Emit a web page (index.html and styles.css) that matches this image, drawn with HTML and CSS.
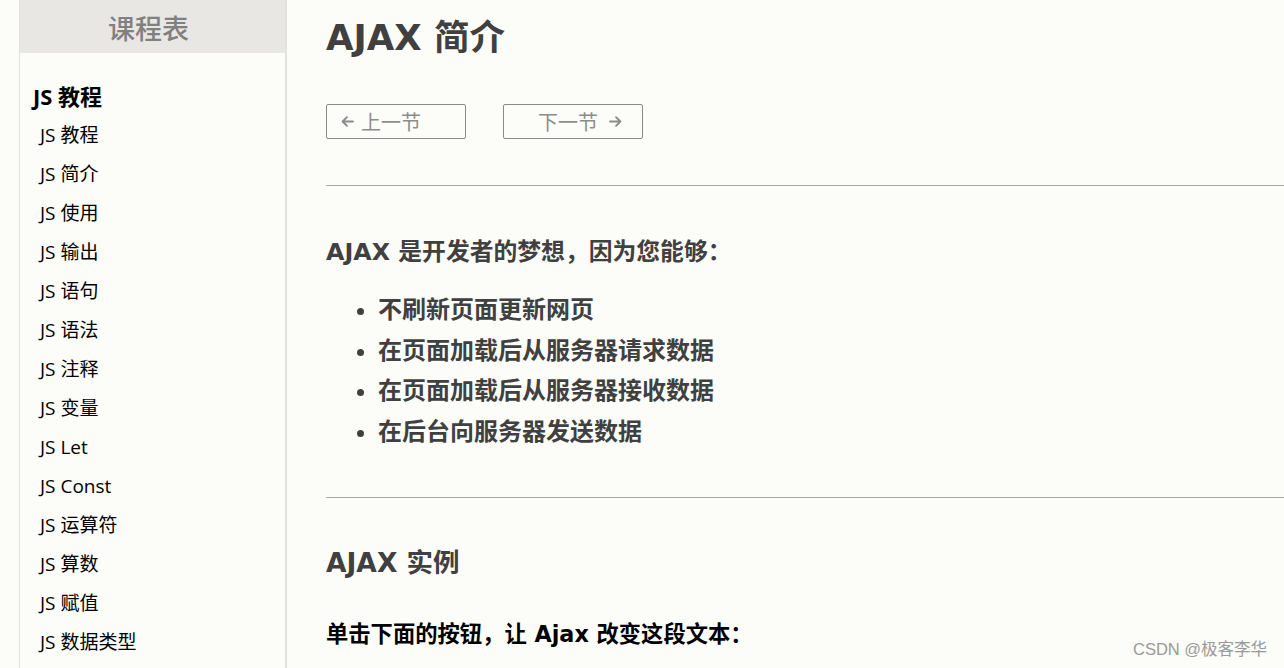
FILE: index.html
```html
<!DOCTYPE html>
<html lang="zh-CN">
<head>
<meta charset="utf-8">
<title>AJAX 简介</title>
<link rel="stylesheet" href="styles.css">
</head>
<body>
<div class="page">
  <aside class="sidebar">
    <div class="side-title">课程表</div>
    <div class="side-group">JS 教程</div>
    <nav class="side-list">
      <a class="side-item">JS 教程</a>
      <a class="side-item">JS 简介</a>
      <a class="side-item">JS 使用</a>
      <a class="side-item">JS 输出</a>
      <a class="side-item">JS 语句</a>
      <a class="side-item">JS 语法</a>
      <a class="side-item">JS 注释</a>
      <a class="side-item">JS 变量</a>
      <a class="side-item">JS Let</a>
      <a class="side-item">JS Const</a>
      <a class="side-item">JS 运算符</a>
      <a class="side-item">JS 算数</a>
      <a class="side-item">JS 赋值</a>
      <a class="side-item">JS 数据类型</a>
    </nav>
  </aside>
  <main class="main">
    <h1 class="title">AJAX 简介</h1>
    <div class="pager">
      <a class="pager-btn prev">
        <svg class="arrow" width="13" height="13" viewBox="0 0 12 12"><path d="M11 6H1.5M5.5 2L1.5 6l4 4" fill="none" stroke="currentColor" stroke-width="1.8" stroke-linecap="round" stroke-linejoin="round"/></svg>
        <span>上一节</span>
      </a>
      <a class="pager-btn next">
        <span>下一节</span>
        <svg class="arrow" width="13" height="13" viewBox="0 0 12 12"><path d="M1 6h9.5M6.5 2l4 4-4 4" fill="none" stroke="currentColor" stroke-width="1.8" stroke-linecap="round" stroke-linejoin="round"/></svg>
      </a>
    </div>
    <hr class="rule rule-1">
    <p class="lead">AJAX 是开发者的梦想，因为您能够：</p>
    <ul class="bullets">
      <li>不刷新页面更新网页</li>
      <li>在页面加载后从服务器请求数据</li>
      <li>在页面加载后从服务器接收数据</li>
      <li>在后台向服务器发送数据</li>
    </ul>
    <hr class="rule rule-2">
    <h2 class="subtitle">AJAX 实例</h2>
    <p class="instruction">单击下面的按钮，让 Ajax 改变这段文本：</p>
  </main>
</div>
<div class="watermark">CSDN @极客李华</div>
</body>
</html>
```
FILE: styles.css
```css
html, body {
  margin: 0;
  padding: 0;
  background: #fcfcf8;
  height: 100%;
  overflow: hidden;
}

body {
  font-family: "DejaVu Sans", "Noto Sans CJK SC", sans-serif;
  color: #404040;
}

.page {
  display: flex;
  align-items: flex-start;
  height: 668px;
}

.sidebar {
  width: 265px;
  margin-left: 19px;
  height: 668px;
  border-left: 1px solid #e2e2de;
  border-right: 2px solid #e2e2de;
  flex-shrink: 0;
  font-family: "Open Sans", "Noto Sans CJK SC", sans-serif;
  color: #000;
}

.side-title {
  height: 53px;
  background: #e8e7e3;
  color: #808080;
  font-family: "Noto Sans CJK SC", sans-serif;
  font-size: 27px;
  font-weight: 500;
  line-height: 55px;
  text-align: center;
  padding-right: 8px;
}

.side-group {
  padding-top: 23px;
  padding-left: 13px;
  font-size: 22px;
  font-weight: bold;
  line-height: 40px;
}

.side-list {
  display: flex;
  flex-direction: column;
}

.side-item {
  display: block;
  padding-left: 20px;
  font-size: 19px;
  line-height: 39px;
  color: #000;
}

.main {
  flex: 1;
  margin-left: 39px;
  min-width: 0;
}

.title {
  margin: 15px 0 0;
  font-size: 35.5px;
  line-height: 46px;
  font-weight: bold;
  color: #404040;
}

.pager {
  display: flex;
  gap: 37px;
  margin-top: 43px;
}

.pager-btn {
  box-sizing: border-box;
  width: 140px;
  height: 35px;
  border: 1.5px solid #8a8a8a;
  border-radius: 2px;
  display: flex;
  align-items: center;
  color: #8c8c8c;
  font-family: "Noto Sans CJK SC", sans-serif;
  font-size: 20px;
  line-height: 1;
}

.pager-btn.prev {
  padding-left: 14px;
  gap: 7px;
}

.pager-btn.next {
  padding-left: 34px;
  gap: 11px;
}

.arrow {
  flex-shrink: 0;
}

.rule {
  border: 0;
  height: 1px;
  background: #a8a8a4;
  margin: 0;
}

.rule-1 {
  margin-top: 46px;
}

.lead {
  margin: 46px 0 0;
  font-size: 23.8px;
  line-height: 40px;
  font-weight: bold;
}

.bullets {
  margin: 18px 0 0;
  padding-left: 52px;
  font-size: 24px;
  line-height: 40.5px;
  font-weight: bold;
}

.rule-2 {
  margin-top: 45px;
}

.subtitle {
  margin: 45px 0 0;
  font-size: 26.5px;
  line-height: 40px;
  font-weight: bold;
}

.instruction {
  margin: 31px 0 0;
  font-size: 22.3px;
  line-height: 40px;
  font-weight: bold;
  color: #000;
}

.watermark {
  position: absolute;
  left: 1133px;
  top: 639px;
  font-family: "Liberation Sans", "Noto Sans CJK SC", sans-serif;
  font-size: 16.5px;
  line-height: 20px;
  color: #9a9a9a;
}
```
